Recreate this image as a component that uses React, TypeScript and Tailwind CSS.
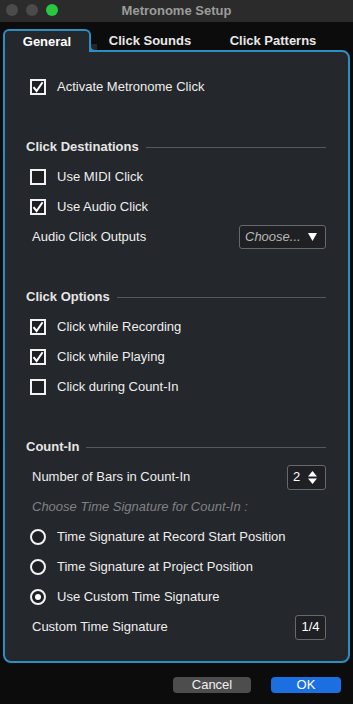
import React from "react";

const font = { fontFamily: '"Liberation Sans", Arial, sans-serif' };

function Check({ on }: { on?: boolean }) {
  return (
    <span className="flex h-4 w-4 shrink-0 items-center justify-center border-2 border-[#f2f2f2] bg-[#1d1f22]">
      {on && (
        <svg width="12" height="12" viewBox="0 0 12 12">
          <path d="M1.5 6.2 L4.6 10 L10.6 1.2" fill="none" stroke="#fff" strokeWidth="2" />
        </svg>
      )}
    </span>
  );
}

function Radio({ on }: { on?: boolean }) {
  return (
    <span className="flex h-4 w-4 shrink-0 items-center justify-center rounded-full border-2 border-[#f2f2f2] bg-[#1d1f22]">
      {on && <span className="h-[6px] w-[6px] rounded-full bg-white" />}
    </span>
  );
}

function CheckRow({ label, on }: { label: string; on?: boolean }) {
  return (
    <div className="flex h-[30px] items-center gap-[11px] pl-1">
      <Check on={on} />
      <span>{label}</span>
    </div>
  );
}

function RadioRow({ label, on }: { label: string; on?: boolean }) {
  return (
    <div className="flex h-[30px] items-center gap-[11px] pl-1">
      <Radio on={on} />
      <span>{label}</span>
    </div>
  );
}

function Header({ title }: { title: string }) {
  return (
    <div className="mt-[30px] flex h-[30px] items-center gap-[7px] font-bold">
      <span className="text-[#e6e6e6]">{title}</span>
      <span className="h-px flex-1 bg-[#55585c]" />
    </div>
  );
}

export default function App() {
  return (
    <div className="flex h-[704px] w-[353px] flex-col bg-[#0c0c0c] text-[13px] text-[#eeeeee]" style={font}>
      {/* title bar */}
      <div className="relative flex h-[22px] items-center justify-center bg-[#2b2b2b]">
        <div className="absolute left-[6px] top-[4px] flex gap-[8px]">
          <span className="h-3 w-3 rounded-full bg-[#4b4b4b]" />
          <span className="h-3 w-3 rounded-full bg-[#4b4b4b]" />
          <span className="h-3 w-3 rounded-full bg-[#28c840]" />
        </div>
        <span className="font-bold text-[#9c9c9c]">Metronome Setup</span>
      </div>

      {/* tabs */}
      <div className="mt-[7px] flex h-[23px] items-stretch pl-[3px] font-bold">
        <div className="relative z-10 flex w-[88px] items-center justify-center rounded-t-[6px] border-2 border-b-0 border-[#2b8fc2] bg-[#24272b] text-white">
          General
          <span className="absolute bottom-0 left-[84px] h-[8px] w-[8px] rounded-bl-[6px] border-b-2 border-l-2 border-[#2b8fc2] bg-[#24272b]" />
        </div>
        <div className="flex w-[118px] items-center justify-center text-[#e8e8e8]">Click Sounds</div>
        <div className="flex w-[128px] items-center justify-center text-[#e8e8e8]">Click Patterns</div>
      </div>

      {/* panel */}
      <div className="mx-[3px] -mt-[2px] flex flex-col rounded-b-[8px] rounded-tr-[8px] border-2 border-[#2b8fc2] bg-[#24272b] pb-[19px] pl-[21px] pr-[22px] pt-[20px]">
        <CheckRow label="Activate Metronome Click" on />

        <Header title="Click Destinations" />
        <CheckRow label="Use MIDI Click" />
        <CheckRow label="Use Audio Click" on />
        <div className="flex h-[30px] items-center justify-between pl-[6px]">
          <span>Audio Click Outputs</span>
          <div className="flex h-6 w-[87px] items-center justify-between rounded-[3px] border border-[#66686c] bg-[#1e2023] pl-[5px] pr-[8px]">
            <span className="italic text-[#b9b9b9]">Choose...</span>
            <svg width="9" height="8" viewBox="0 0 9 8">
              <path d="M0 0 H9 L4.5 8 Z" fill="#fff" />
            </svg>
          </div>
        </div>

        <Header title="Click Options" />
        <CheckRow label="Click while Recording" on />
        <CheckRow label="Click while Playing" on />
        <CheckRow label="Click during Count-In" />

        <Header title="Count-In" />
        <div className="flex h-[30px] items-center justify-between pl-[6px]">
          <span>Number of Bars in Count-In</span>
          <div className="flex h-[25px] w-[39px] items-center justify-between rounded-[3px] border border-[#66686c] bg-[#1e2023] pl-[5px] pr-[8px]">
            <span className="text-white">2</span>
            <svg width="9" height="13" viewBox="0 0 9 13">
              <path d="M0 5.5 L4.5 0 L9 5.5 Z M0 7.5 L4.5 13 L9 7.5 Z" fill="#fff" />
            </svg>
          </div>
        </div>
        <div className="flex h-[30px] items-center pl-[6px] italic text-[#808286]">
          Choose Time Signature for Count-In :
        </div>
        <RadioRow label="Time Signature at Record Start Position" />
        <RadioRow label="Time Signature at Project Position" />
        <RadioRow label="Use Custom Time Signature" on />
        <div className="flex h-[30px] items-center justify-between pl-[6px]">
          <span>Custom Time Signature</span>
          <div className="flex h-[25px] w-[31px] items-center justify-center rounded-[3px] border border-[#66686c] bg-[#1e2023] text-white">
            1/4
          </div>
        </div>
      </div>

      {/* buttons */}
      <div className="mt-[14px] flex justify-end gap-5 pr-[12px]">
        <button className="h-4 w-[78px] rounded-[4px] bg-[#4d4d4d] text-[13px] leading-4 text-[#f0f0f0]">Cancel</button>
        <button className="h-4 w-[70px] rounded-[4px] bg-[#1b6fe0] text-[13px] leading-4 text-white">OK</button>
      </div>
    </div>
  );
}
